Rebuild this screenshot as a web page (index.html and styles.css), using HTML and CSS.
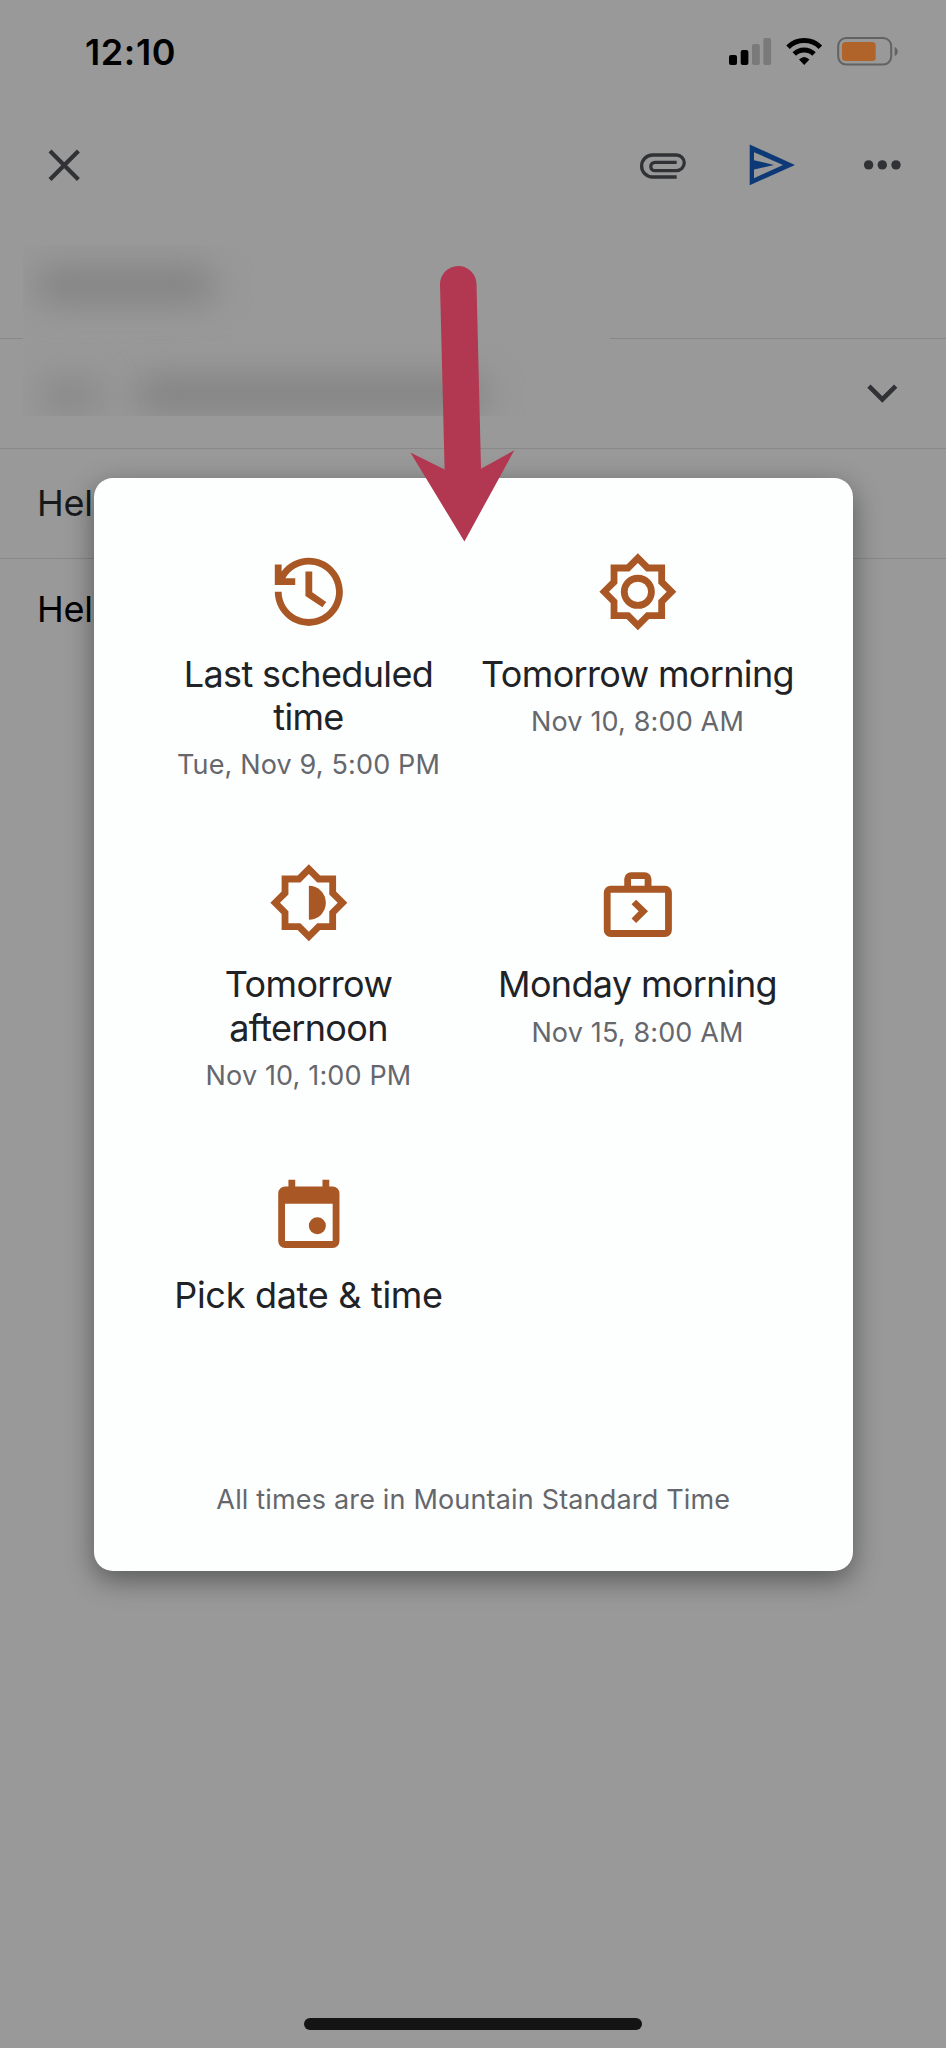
FILE: index.html
```html
<!DOCTYPE html>
<html lang="en">
<head>
    <meta charset="UTF-8">
    <meta name="viewport" content="width=device-width, initial-scale=1.0">
    <title>Schedule send</title>
    <link rel="stylesheet" href="styles.css">
</head>
<body>
    <div class="screen">
        <header class="status-bar">
            <span class="clock">12:10</span>
            <svg class="status-icons" width="170" height="32" viewBox="728 35 170 32">
                <rect x="729" y="55" width="8" height="10" rx="2"/>
                <rect x="740.7" y="50" width="7.7" height="15" rx="2"/>
                <g fill="#7a7a7a">
                    <rect x="752" y="44" width="7.8" height="21" rx="2"/>
                    <rect x="763.3" y="38" width="7.8" height="27" rx="2"/>
                </g>
                <g fill="none" stroke="#000" stroke-width="5">
                    <path d="M788 47.2A23 23 0 0 1 820.4 47.2"/>
                    <path d="M794.3 54A14 14 0 0 1 814 54"/>
                </g>
                <path d="M799 59.6Q804.2 54.4 809.4 59.6L804.2 65z"/>
                <rect x="838.2" y="38" width="53" height="26.6" rx="8" fill="none" stroke="#626262" stroke-width="2"/>
                <rect x="842" y="42" width="33.7" height="19" rx="3.5" fill="#b1642a"/>
                <path d="M894.7 47Q897.7 48.5 897.7 51.5T894.7 56z" fill="#626262"/>
            </svg>
        </header>

        <nav class="toolbar">
            <svg width="34" height="34" viewBox="47 147.5 34 34" fill="none" stroke="#303235" stroke-width="4.2">
                <path d="M50 150.4L78.4 178.9M78.4 150.4L50 178.9"/>
            </svg>
            <div class="actions">
                <svg width="48" height="44" viewBox="639 142.5 48 44" fill="none" stroke="#303235" stroke-width="3.3">
                    <path d="M676.7 176.5H652.6A11 11 0 0 1 652.6 154.5H676.4A7.85 7.85 0 0 1 676.4 170.2H655A4.2 4.2 0 0 1 655 161.8H676.7"/>
                </svg>
                <svg width="48" height="44" viewBox="748 142.5 48 44" fill="#0d3a77" fill-rule="evenodd">
                    <path d="M749.7 144L795 164.4L749.7 184.8zM754 151.7V159.7L774 164.4L754 169V177.7L783 164.4z"/>
                </svg>
                <svg width="40" height="44" viewBox="863 142.5 40 44" fill="#303235">
                    <circle cx="868.6" cy="164.4" r="4.7"/>
                    <circle cx="882.3" cy="164.4" r="4.7"/>
                    <circle cx="896" cy="164.4" r="4.7"/>
                </svg>
            </div>
        </nav>

        <main class="compose">
            <div class="field from"></div>
            <div class="field to">
                <svg width="32" height="22" viewBox="866 382 32 22" fill="none" stroke="#303235" stroke-width="4.6">
                    <path d="M868.9 386.2L882.3 399.5L895.7 386.2"/>
                </svg>
            </div>
            <div class="field subject">Hel</div>
            <div class="field message">Hel</div>
        </main>

        <!-- redacted addresses -->
        <div class="redacted">
            <span class="smudge smudge-from"></span>
            <span class="smudge smudge-to"></span>
            <span class="smudge smudge-address"></span>
        </div>

        <div class="dialog">
            <div class="options">
                <div class="option">
                    <svg class="icon" viewBox="0 0 24 24">
                        <path d="M12 2C8.7 2 5.8 3.6 4 6V4H2v6h6V8H5.1C6.5 5.6 9.1 4 12 4c4.4 0 8 3.6 8 8s-3.6 8-8 8-8-3.6-8-8H2c0 5.5 4.5 10 10 10s10-4.5 10-10S17.5 2 12 2z"/>
                        <path d="M11 6v7.2l5 3.3 1.1-1.5L13 12.1V6z"/>
                    </svg>
                    <div class="title">Last scheduled<br>time</div>
                    <div class="date">Tue, Nov 9, 5:00 PM</div>
                </div>
                <div class="option">
                    <svg class="icon" viewBox="0 0 24 24">
                        <path d="M20 8.69V4h-4.69L12 .69 8.69 4H4v4.69L.69 12 4 15.31V20h4.69L12 23.31 15.31 20H20v-4.69L23.31 12 20 8.69zm-2 5.79V18h-3.52L12 20.48 9.52 18H6v-3.52L3.52 12 6 9.52V6h3.52L12 3.52 14.48 6H18v3.52L20.48 12 18 14.48z"/>
                        <circle cx="12" cy="12" r="4" fill="none" stroke="#a95825" stroke-width="2"/>
                    </svg>
                    <div class="title">Tomorrow morning</div>
                    <div class="date">Nov 10, 8:00 AM</div>
                </div>
                <div class="option">
                    <svg class="icon" viewBox="0 0 24 24">
                        <path d="M20 8.69V4h-4.69L12 .69 8.69 4H4v4.69L.69 12 4 15.31V20h4.69L12 23.31 15.31 20H20v-4.69L23.31 12 20 8.69zm-2 5.79V18h-3.52L12 20.48 9.52 18H6v-3.52L3.52 12 6 9.52V6h3.52L12 3.52 14.48 6H18v3.52L20.48 12 18 14.48z"/>
                        <path d="M12 7a5 5 0 0 1 0 10z"/>
                    </svg>
                    <div class="title">Tomorrow<br>afternoon</div>
                    <div class="date">Nov 10, 1:00 PM</div>
                </div>
                <div class="option">
                    <svg class="icon" viewBox="0 0 24 24">
                        <path fill-rule="evenodd" d="M8 7V5a2 2 0 0 1 2-2h4a2 2 0 0 1 2 2v2h4a2 2 0 0 1 2 2v11a2 2 0 0 1-2 2H4a2 2 0 0 1-2-2V9a2 2 0 0 1 2-2zM10 5v2h4V5zM4 9v11h16V9z"/>
                        <path d="M11.5 11.1l3.5 3.4-3.5 3.4-1.35-1.3 2.1-2.1-2.1-2.1z"/>
                    </svg>
                    <div class="title">Monday morning</div>
                    <div class="date">Nov 15, 8:00 AM</div>
                </div>
                <div class="option">
                    <svg class="icon" viewBox="0 0 24 24">
                        <path fill-rule="evenodd" d="M6 2h2v2h8V2h2v2h1a2 2 0 0 1 2 2v14a2 2 0 0 1-2 2H5a2 2 0 0 1-2-2V6a2 2 0 0 1 2-2h1zM5 9v11h14V9z"/>
                        <circle cx="14.5" cy="15.5" r="2.5"/>
                    </svg>
                    <div class="title pick">Pick date &amp; time</div>
                </div>
            </div>
            <p class="timezone">All times are in Mountain Standard Time</p>
        </div>

        <svg class="arrow" width="106" height="276" viewBox="409 265.5 106 276" fill="#b13850">
            <path d="M440 284A18.2 18.2 0 0 1 476.5 283.5L481 468.2L514.3 449.8L464.4 541L410.4 452L444.6 469z"/>
        </svg>

        <div class="home-indicator"></div>
    </div>
</body>
</html>
```
FILE: styles.css
```css
* {
    box-sizing: border-box;
}
body {
    margin: 0;
    font-family: Inter, "Liberation Sans", sans-serif;
    background-color: #999;
}
svg {
    display: block;
}
.screen {
    position: relative;
    width: 946px;
    height: 2048px;
    overflow: hidden;
    background-color: #999;
}

/* Status bar and toolbar */
.status-bar {
    display: flex;
    justify-content: space-between;
    align-items: center;
    height: 104px;
    padding: 0 48px 2px 85px;
}
.clock {
    padding-top: 2px;
    font-size: 36px;
    font-weight: 600;
    letter-spacing: 0.6px;
    color: #000;
}
.toolbar {
    display: flex;
    justify-content: space-between;
    align-items: center;
    height: 121px;
    padding: 0 43px 0 47px;
}
.actions {
    display: flex;
    align-items: center;
}
.actions svg:nth-child(2) {
    margin: 0 67px 0 61px;
}

/* Compose fields */
.field {
    height: 110px;
    padding-left: 37px;
    border-bottom: 1px solid #888;
    font-size: 36px;
    line-height: 109px;
    letter-spacing: -0.3px;
    color: #16181a;
}
.from {
    height: 114px;
}
.to {
    display: flex;
    justify-content: flex-end;
    align-items: center;
    padding: 0 48px 2px 0;
}
.message {
    border: 0;
    line-height: 101px;
    color: #000;
}
.redacted {
    position: absolute;
    left: 23px;
    top: 245px;
    width: 587px;
    height: 171px;
    overflow: hidden;
    background-color: #999;
}
.smudge {
    position: absolute;
    height: 36px;
    border-radius: 16px;
    background-color: #828282;
    filter: blur(17px);
}
.smudge-from {
    left: 12px;
    top: 22px;
    width: 180px;
}
.smudge-to {
    left: 16px;
    top: 133px;
    width: 64px;
    background-color: #888;
}
.smudge-address {
    left: 112px;
    top: 131px;
    width: 352px;
}

/* Dialog */
.dialog {
    position: absolute;
    left: 94px;
    top: 478px;
    width: 758.5px;
    height: 1093px;
    padding: 73.4px 50px 0;
    border-radius: 19px;
    background-color: #fdfefe;
    box-shadow: 0 9px 28px rgba(0, 0, 0, 0.42);
    text-align: center;
}
.options {
    display: grid;
    grid-template-columns: 329px 329px;
    grid-auto-rows: 310.7px;
}
.icon {
    width: 81.7px;
    height: 81.7px;
    margin: 0 auto 19.6px;
    fill: #a95825;
}
.title {
    font-size: 36px;
    line-height: 43.5px;
    letter-spacing: -0.65px;
    color: #202226;
    white-space: nowrap;
}
.pick {
    letter-spacing: -0.3px;
}
.date {
    margin-top: 8.8px;
    font-size: 27px;
    line-height: 33px;
    letter-spacing: 0.15px;
    color: #65676c;
}
.timezone {
    margin: 0;
    font-size: 27px;
    line-height: 33px;
    letter-spacing: 0.17px;
    color: #65676c;
}

.arrow {
    position: absolute;
    left: 409px;
    top: 265.5px;
}
.home-indicator {
    position: absolute;
    left: 304px;
    top: 2018px;
    width: 338px;
    height: 12px;
    border-radius: 6px;
    background-color: #141414;
}
```
